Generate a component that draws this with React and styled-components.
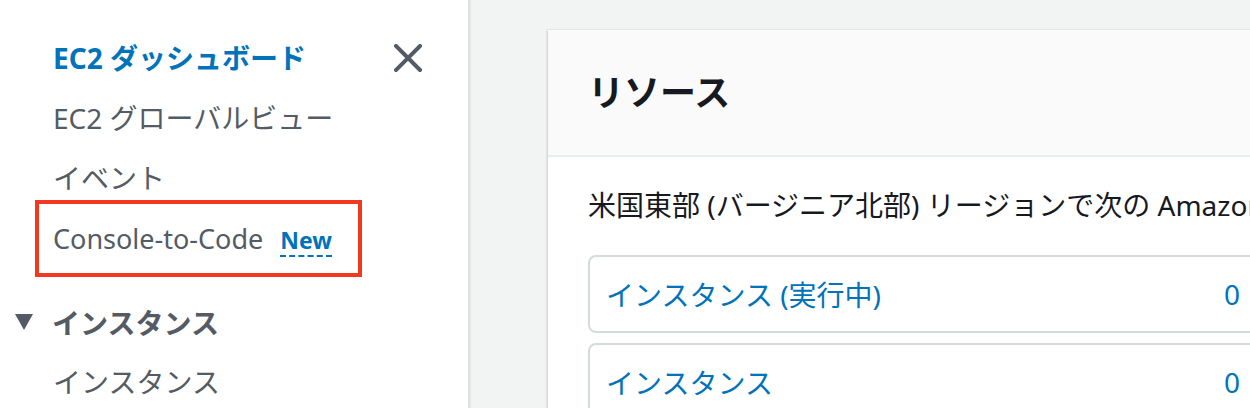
import React from 'react';
import styled, { createGlobalStyle } from 'styled-components';

const GlobalStyle = createGlobalStyle`
  body {
    margin: 0;
    font-family: "Noto Sans", "Noto Sans CJK JP", sans-serif;
  }
`

const navItems = ['EC2 グローバルビュー', 'イベント'];

const CloseIcon = () => (
  <svg width="28" height="28" viewBox="0 0 28 28">
    <path d="M2 2 L26 26 M26 2 L2 26" stroke="#545b64" strokeWidth="4" strokeLinecap="square" />
  </svg>
)

const Caret = () => (
  <svg width="18" height="16" viewBox="0 0 18 16">
    <polygon points="0,0 18,0 9,16" fill="#545b64" />
  </svg>
)

const App = () => (
  <Page>
    <GlobalStyle />
    <Sidebar>
      <NavList>
        <HeaderRow>
          <NavItem $active>EC2 ダッシュボード</NavItem>
          <CloseButton><CloseIcon /></CloseButton>
        </HeaderRow>
        {navItems.map((item) => (
          <NavItem key={item}>{item}</NavItem>
        ))}
        <Highlight>
          <NavItem $size={27}>Console-to-Code</NavItem>
          <NewBadge>New</NewBadge>
        </Highlight>
        <GroupHeader>
          <Caret />
          <span>インスタンス</span>
        </GroupHeader>
        <NavItem>インスタンス</NavItem>
      </NavList>
    </Sidebar>
    <Main>
      <Card>
        <CardHeader>
          <Title>リソース</Title>
        </CardHeader>
        <CardBody>
          <Intro>米国東部 (バージニア北部) リージョンで次の Amazon EC2 リソースを使用しています:</Intro>
          <ResourceBox>
            <ResourceLink>インスタンス (実行中)</ResourceLink>
            <Count>0</Count>
          </ResourceBox>
          <ResourceBox>
            <ResourceLink>インスタンス</ResourceLink>
            <Count>0</Count>
          </ResourceBox>
        </CardBody>
      </Card>
    </Main>
  </Page>
)

const Page = styled.div`
  display: flex;
  width: 1250px;
  height: 408px;
  overflow: hidden;
  background: #f2f3f3;
`
const Sidebar = styled.nav`
  flex: 0 0 470px;
  background: #ffffff;
  border-right: 2px solid #dde2e2;
  box-shadow: 1px 0 2px rgba(0, 0, 0, 0.06);
  padding: 38px 46px 0 53px;
  box-sizing: border-box;
`
const NavList = styled.div`
  display: flex;
  flex-direction: column;
  gap: 20px;
`
const HeaderRow = styled.div`
  display: flex;
  justify-content: space-between;
  align-items: center;
`
const NavItem = styled.div`
  font-size: ${(p) => p.$size || 28}px;
  line-height: 40px;
  height: 40px;
  color: ${(p) => (p.$active ? '#0073bb' : '#545b64')};
  font-weight: ${(p) => (p.$active ? 700 : 400)};
  white-space: nowrap;
`
const CloseButton = styled.div`
  display: flex;
  width: 28px;
  height: 28px;
`
const Highlight = styled.div`
  display: flex;
  align-items: center;
  gap: 17px;
  width: fit-content;
  height: 77px;
  box-sizing: border-box;
  margin: -18px 0 0 -18px;
  padding: 0 26px 0 14px;
  border: 4px solid #f0391f;
`
const NewBadge = styled.span`
  font-size: 23px;
  font-weight: 700;
  color: #0073bb;
  line-height: 30px;
  padding-top: 4px;
  border-bottom: 2px dashed #0073bb;
`
const GroupHeader = styled.div`
  display: flex;
  align-items: center;
  gap: 19px;
  margin: 5px 0 0 -38px;
  height: 40px;
  font-size: 28px;
  font-weight: 700;
  color: #545b64;
`
const Main = styled.main`
  flex: 1;
  padding: 30px 0 0 78px;
  min-width: 0;
`
const Card = styled.section`
  width: 760px;
  background: #ffffff;
  box-shadow: -1px 0 2px rgba(0, 0, 0, 0.15), 0 1px 1px rgba(0, 0, 0, 0.1);
`
const CardHeader = styled.div`
  height: 127px;
  box-sizing: border-box;
  display: flex;
  align-items: center;
  padding: 0 40px 4px;
  background: #fafafa;
  border-bottom: 2px solid #eaeded;
`
const Title = styled.h2`
  margin: 0;
  font-size: 36px;
  font-weight: 700;
  color: #16191f;
`
const CardBody = styled.div`
  display: flex;
  flex-direction: column;
  gap: 10px;
  padding: 28px 40px 0 40px;
`
const Intro = styled.p`
  margin: 0 0 20px;
  font-size: 28px;
  line-height: 40px;
  color: #16191f;
  white-space: nowrap;
`
const ResourceBox = styled.div`
  display: flex;
  justify-content: space-between;
  align-items: center;
  height: 78px;
  box-sizing: border-box;
  padding: 0 26px 0 16px;
  border: 2px solid #d5dbdb;
  border-radius: 8px;
`
const ResourceLink = styled.a`
  font-size: 28px;
  color: #0073bb;
  text-decoration: none;
`
const Count = styled.span`
  font-size: 28px;
  color: #0073bb;
`

export default App;
